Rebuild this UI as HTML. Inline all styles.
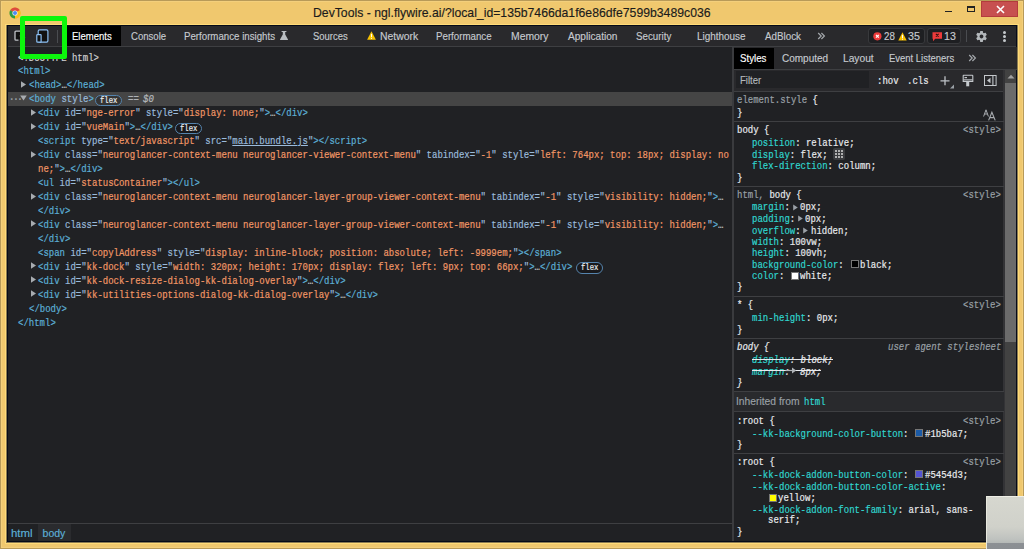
<!DOCTYPE html>
<html><head><meta charset="utf-8"><style>
html,body{margin:0;padding:0;width:1024px;height:549px;overflow:hidden;position:relative;background:#f0c86e}
body>div,body>span,body>svg{position:absolute}
.t{white-space:pre}
</style></head><body>
<div style="left:0px;top:0px;width:1024px;height:549px;background:#f0c86e"></div>
<div style="left:0px;top:0px;width:1024px;height:1px;background:#b89a58"></div>
<div style="left:0px;top:0px;width:1px;height:549px;background:#b89a58"></div>
<div style="left:1023px;top:0px;width:1px;height:549px;background:#b89a58"></div>
<div style="left:0px;top:548px;width:1024px;height:1px;background:#b89a58"></div>
<div style="left:1px;top:1px;width:1022px;height:547px;box-sizing:border-box;border:1px solid #f3cf7c"></div>
<div style="left:5px;top:24px;width:1014px;height:520px;background:#ffdb78"></div>
<svg style="position:absolute;left:8.5px;top:6.5px" width="12" height="12" viewBox="0 0 12 12">
<circle cx="6" cy="6" r="5.5" fill="#f0b030"/>
<path d="M6 6 L1.24 3.25 A5.5 5.5 0 0 1 10.76 3.25 Z" fill="#dd4b3e"/>
<path d="M6 6 L10.76 3.25 A5.5 5.5 0 0 1 6 11.5 Z" fill="#f6c21c"/>
<path d="M6 6 L6 11.5 A5.5 5.5 0 0 1 1.24 3.25 Z" fill="#2a9d4a"/>
<circle cx="6" cy="6" r="2.6" fill="#f4f4f4"/>
<circle cx="6" cy="6" r="2.0" fill="#4a8af4"/>
</svg>
<span class="t" style="left:312.80px;top:2.57px;font-family:'Liberation Sans', sans-serif;font-size:12.2px;font-weight:400;font-style:normal;line-height:20px;color:#1b1b1b;-webkit-text-stroke:0.15px;transform:scaleX(1.0038);transform-origin:0 0;">DevTools - ngl.flywire.ai/?local_id=135b7466da1f6e86dfe7599b3489c036</span>
<div style="left:945px;top:10.5px;width:7px;height:1.6px;background:#222"></div>
<div style="left:967px;top:6px;width:8px;height:6px;box-sizing:border-box;border:1px solid #222;border-top-width:2px"></div>
<div style="left:981px;top:1px;width:37px;height:16px;background:#c75050;box-sizing:border-box;border:1px solid #b33c3c"></div>
<svg style="position:absolute;left:996px;top:5px" width="9" height="9" viewBox="0 0 9 9"><path d="M1 1L8 8M8 1L1 8" stroke="#fff" stroke-width="1.6"/></svg>
<div style="left:6px;top:25px;width:1012px;height:518px;background:#8a7a52"></div>
<div style="left:7px;top:25px;width:1010px;height:517px;background:#050a18"></div>
<div style="left:8px;top:26px;width:1008px;height:515px;background:#202124"></div>
<div style="left:8px;top:26px;width:1008px;height:20px;background:#29292c"></div>
<div style="left:8px;top:46px;width:1008px;height:1px;background:#3e3f42"></div>
<svg style="position:absolute;left:14px;top:30px" width="13" height="12" viewBox="0 0 13 12"><path d="M4.5 10.2H1.9Q1 10.2 1 9.3V2Q1 1.2 1.9 1.2H9.5Q10.3 1.2 10.3 2V4.5" fill="#111" stroke="#c0c4c8" stroke-width="1.3"/><path d="M5.5 5.5L11.5 7.8L9 8.8L7.8 11.3Z" fill="#c0c4c8"/></svg>
<svg style="position:absolute;left:35px;top:28px" width="15" height="16" viewBox="0 0 15 16"><rect x="3.2" y="1.9" width="9.7" height="12.2" rx="1.3" fill="#111" stroke="#8cc0f4" stroke-width="1.2"/><rect x="1.8" y="6.6" width="4.3" height="7.5" rx="0.6" fill="#111" stroke="#8cc0f4" stroke-width="1.2"/></svg>
<div style="left:57px;top:30px;width:1px;height:13px;background:#4a4c50"></div>
<div style="left:67px;top:26px;width:54px;height:20px;background:#000"></div>
<span class="t" style="left:71.79px;top:26.36px;font-family:'Liberation Sans', sans-serif;font-size:10.5px;font-weight:400;font-style:normal;line-height:20px;color:#ffffff;-webkit-text-stroke:0.15px;transform:scaleX(0.9070);transform-origin:0 0;">Elements</span>
<span class="t" style="left:130.70px;top:26.36px;font-family:'Liberation Sans', sans-serif;font-size:10.5px;font-weight:400;font-style:normal;line-height:20px;color:#c6cacf;-webkit-text-stroke:0.15px;transform:scaleX(0.9105);transform-origin:0 0;">Console</span>
<span class="t" style="left:183.88px;top:26.36px;font-family:'Liberation Sans', sans-serif;font-size:10.5px;font-weight:400;font-style:normal;line-height:20px;color:#c6cacf;-webkit-text-stroke:0.15px;transform:scaleX(0.9224);transform-origin:0 0;">Performance insights</span>
<span class="t" style="left:313.20px;top:26.36px;font-family:'Liberation Sans', sans-serif;font-size:10.5px;font-weight:400;font-style:normal;line-height:20px;color:#c6cacf;-webkit-text-stroke:0.15px;transform:scaleX(0.9000);transform-origin:0 0;">Sources</span>
<span class="t" style="left:379.81px;top:26.36px;font-family:'Liberation Sans', sans-serif;font-size:10.5px;font-weight:400;font-style:normal;line-height:20px;color:#c6cacf;-webkit-text-stroke:0.15px;transform:scaleX(0.9919);transform-origin:0 0;">Network</span>
<span class="t" style="left:436.17px;top:26.36px;font-family:'Liberation Sans', sans-serif;font-size:10.5px;font-weight:400;font-style:normal;line-height:20px;color:#c6cacf;-webkit-text-stroke:0.15px;transform:scaleX(0.9254);transform-origin:0 0;">Performance</span>
<span class="t" style="left:510.71px;top:26.36px;font-family:'Liberation Sans', sans-serif;font-size:10.5px;font-weight:400;font-style:normal;line-height:20px;color:#c6cacf;-webkit-text-stroke:0.15px;transform:scaleX(0.9892);transform-origin:0 0;">Memory</span>
<span class="t" style="left:568.00px;top:26.36px;font-family:'Liberation Sans', sans-serif;font-size:10.5px;font-weight:400;font-style:normal;line-height:20px;color:#c6cacf;-webkit-text-stroke:0.15px;transform:scaleX(0.9627);transform-origin:0 0;">Application</span>
<span class="t" style="left:635.57px;top:26.36px;font-family:'Liberation Sans', sans-serif;font-size:10.5px;font-weight:400;font-style:normal;line-height:20px;color:#c6cacf;-webkit-text-stroke:0.15px;transform:scaleX(0.9297);transform-origin:0 0;">Security</span>
<span class="t" style="left:697.45px;top:26.36px;font-family:'Liberation Sans', sans-serif;font-size:10.5px;font-weight:400;font-style:normal;line-height:20px;color:#c6cacf;-webkit-text-stroke:0.15px;transform:scaleX(0.9460);transform-origin:0 0;">Lighthouse</span>
<span class="t" style="left:765.00px;top:26.36px;font-family:'Liberation Sans', sans-serif;font-size:10.5px;font-weight:400;font-style:normal;line-height:20px;color:#c6cacf;-webkit-text-stroke:0.15px;transform:scaleX(0.9342);transform-origin:0 0;">AdBlock</span>
<svg style="position:absolute;left:280px;top:31px" width="8" height="9" viewBox="0 0 8 9"><path d="M1.6 0H6.4V1.1H5.2V3.5L8 8.5Q8 9 7.5 9H0.5Q0 9 0 8.5L2.8 3.5V1.1H1.6Z" fill="#b8bcc0"/></svg>
<svg style="position:absolute;left:367px;top:31.3px" width="9" height="9" viewBox="0 0 9 9"><path d="M4.5 0.2L8.9 8.7H0.1Z" fill="#f6c000"/><rect x="4" y="2.8" width="1" height="3.2" fill="#fff"/><rect x="4" y="6.8" width="1" height="1" fill="#fff"/></svg>
<svg style="position:absolute;left:817px;top:32px" width="9" height="8" viewBox="0 0 9 8"><path d="M1.2 1L4.2 4L1.2 7M4.4 1L7.4 4L4.4 7" fill="none" stroke="#a4a8ac" stroke-width="1.2"/></svg>
<div style="left:867.5px;top:28px;width:57.5px;height:16px;box-sizing:border-box;border:1.6px solid #38393c;border-radius:3px;background:#1e1f22"></div>
<svg style="position:absolute;left:872.5px;top:32.2px" width="9" height="9" viewBox="0 0 9 9"><circle cx="4.4" cy="4.3" r="4.1" fill="#ee3b3b"/><path d="M3 2.9L5.8 5.7M5.8 2.9L3 5.7" stroke="#fff" stroke-width="1.2"/></svg>
<span class="t" style="left:883.80px;top:26.36px;font-family:'Liberation Sans', sans-serif;font-size:10.5px;font-weight:400;font-style:normal;line-height:20px;color:#c6cacf;-webkit-text-stroke:0.15px;transform:scaleX(0.9273);transform-origin:0 0;">28</span>
<svg style="position:absolute;left:898px;top:32px" width="9" height="9" viewBox="0 0 9 9"><path d="M4.5 0.2L8.7 8.6H0.3Z" fill="#f6c000"/><rect x="4" y="2.8" width="1" height="3.2" fill="#fff"/><rect x="4" y="6.7" width="1" height="1" fill="#fff"/></svg>
<span class="t" style="left:907.78px;top:26.36px;font-family:'Liberation Sans', sans-serif;font-size:10.5px;font-weight:400;font-style:normal;line-height:20px;color:#c6cacf;-webkit-text-stroke:0.15px;transform:scaleX(1.0200);transform-origin:0 0;">35</span>
<div style="left:926.5px;top:28px;width:34.5px;height:16px;box-sizing:border-box;border:1.6px solid #38393c;border-radius:3px;background:#1e1f22"></div>
<svg style="position:absolute;left:932px;top:32px" width="11" height="10" viewBox="0 0 11 10"><path d="M0.5 0.3H10V6.8H3.2L1 9.3V6.8H0.5Z" fill="#ee3b3b"/><path d="M3.9 1.9L6.6 4.6M6.6 1.9L3.9 4.6" stroke="#2a1010" stroke-width="1.1"/></svg>
<span class="t" style="left:944.19px;top:26.36px;font-family:'Liberation Sans', sans-serif;font-size:10.5px;font-weight:400;font-style:normal;line-height:20px;color:#c6cacf;-webkit-text-stroke:0.15px;transform:scaleX(1.0100);transform-origin:0 0;">13</span>
<div style="left:966px;top:30px;width:1px;height:12px;background:#4a4c50"></div>
<svg style="position:absolute;left:975px;top:30px" width="13" height="13" viewBox="0 0 24 24"><path fill="#b4b8bc" d="M19.4 13c.04-.32.1-.66.1-1s-.03-.68-.07-1l2.1-1.65c.2-.15.25-.42.13-.64l-2-3.46c-.12-.22-.39-.3-.61-.22l-2.49 1c-.52-.4-1.08-.73-1.69-.98l-.38-2.65C14.46 2.18 14.25 2 14 2h-4c-.25 0-.46.18-.49.42l-.38 2.65c-.61.25-1.17.59-1.69.98l-2.49-1c-.23-.09-.49 0-.61.22l-2 3.46c-.13.22-.07.49.12.64L4.57 11c-.04.32-.07.65-.07 1s.03.68.07 1l-2.11 1.65c-.19.15-.24.42-.12.64l2 3.46c.12.22.39.3.61.22l2.49-1c.52.4 1.08.73 1.69.98l.38 2.65c.03.24.24.42.49.42h4c.25 0 .46-.18.49-.42l.38-2.65c.61-.25 1.17-.59 1.69-.98l2.49 1c.23.09.49 0 .61-.22l2-3.46c.12-.22.07-.49-.12-.64L19.4 13zM12 15.5c-1.93 0-3.5-1.57-3.5-3.5s1.57-3.5 3.5-3.5 3.5 1.57 3.5 3.5-1.57 3.5-3.5 3.5z"/></svg>
<div style="left:1002.8px;top:30.8px;width:3.2px;height:3.2px;background:#c4c8cc;border-radius:50%"></div>
<div style="left:1002.8px;top:34.8px;width:3.2px;height:3.2px;background:#c4c8cc;border-radius:50%"></div>
<div style="left:1002.8px;top:38.8px;width:3.2px;height:3.2px;background:#c4c8cc;border-radius:50%"></div>
<div style="left:8px;top:92px;width:724px;height:13.6px;background:#454545"></div>
<span class="t" style="left:18.4px;top:47.53px;font-family:'Liberation Mono', monospace;font-size:10.6px;line-height:20px;letter-spacing:0.000px;-webkit-text-stroke:0.2px;transform:scaleX(0.8489);transform-origin:0 0;"><span style="color:#cfd0d0">&lt;!DOCTYPE html&gt;</span></span>
<span class="t" style="left:18.4px;top:61.48px;font-family:'Liberation Mono', monospace;font-size:10.6px;line-height:20px;letter-spacing:0.000px;-webkit-text-stroke:0.2px;transform:scaleX(0.8489);transform-origin:0 0;"><span style="color:#5db0d7">&lt;html&gt;</span></span>
<svg style="position:absolute;left:21px;top:80.86px" width="6" height="7" viewBox="0 0 6 7"><path d="M0 0.2L5 3.5L0 6.8Z" fill="#a8acb0"/></svg>
<span class="t" style="left:28.6px;top:75.44px;font-family:'Liberation Mono', monospace;font-size:10.6px;line-height:20px;letter-spacing:0.000px;-webkit-text-stroke:0.2px;transform:scaleX(0.8489);transform-origin:0 0;"><span style="color:#5db0d7">&lt;head&gt;</span><span style="color:#cfd0d0">…</span><span style="color:#5db0d7">&lt;/head&gt;</span></span>
<span class="t" style="left:8.5px;top:89.39px;font-family:'Liberation Mono', monospace;font-size:10.6px;line-height:20px;letter-spacing:-2.200px;-webkit-text-stroke:0.2px;"><span style="color:#9aa0a6">···</span></span>
<svg style="position:absolute;left:20px;top:95.22px" width="7" height="6" viewBox="0 0 7 6"><path d="M0.2 0.5L6.8 0.5L3.5 5.5Z" fill="#a8acb0"/></svg>
<span class="t" style="left:28.6px;top:89.39px;font-family:'Liberation Mono', monospace;font-size:10.6px;line-height:20px;letter-spacing:0.000px;-webkit-text-stroke:0.2px;transform:scaleX(0.8489);transform-origin:0 0;"><span style="color:#5db0d7">&lt;body</span><span style="color:#9bbbdc"> style</span><span style="color:#5db0d7">&gt;</span></span>
<div style="left:95px;top:94.82px;width:27px;height:11.6px;box-sizing:border-box;border:1.3px solid #5584ad;border-radius:6px;background:rgba(0,0,0,0.22)"></div>
<span class="t" style="left:100.20px;top:90.92px;font-family:'Liberation Mono', monospace;font-size:9px;font-weight:400;font-style:normal;line-height:20px;color:#eef0f2;-webkit-text-stroke:0.15px;transform:scaleX(0.8000);transform-origin:0 0;-webkit-text-stroke:0.2px #eef0f2">flex</span>
<span class="t" style="left:127.5px;top:89.39px;font-family:'Liberation Mono', monospace;font-size:10.6px;line-height:20px;letter-spacing:0.000px;-webkit-text-stroke:0.2px;transform:scaleX(0.8489);transform-origin:0 0;"><span style="color:#aeb2b6">==</span></span>
<span class="t" style="left:143px;top:89.39px;font-family:'Liberation Mono', monospace;font-size:10.6px;line-height:20px;letter-spacing:0.000px;-webkit-text-stroke:0.2px;transform:scaleX(0.8489);transform-origin:0 0;font-style:italic"><span style="color:#b4b8bc">$0</span></span>
<svg style="position:absolute;left:31px;top:108.77px" width="6" height="7" viewBox="0 0 6 7"><path d="M0 0.2L5 3.5L0 6.8Z" fill="#a8acb0"/></svg>
<span class="t" style="left:38.4px;top:103.35px;font-family:'Liberation Mono', monospace;font-size:10.6px;line-height:20px;letter-spacing:0.000px;-webkit-text-stroke:0.2px;transform:scaleX(0.8489);transform-origin:0 0;"><span style="color:#5db0d7">&lt;div</span><span style="color:#9bbbdc"> id</span><span style="color:#9bbbdc">=&quot;</span><span style="color:#f29766">nge-error</span><span style="color:#9bbbdc">&quot;</span><span style="color:#9bbbdc"> style</span><span style="color:#9bbbdc">=&quot;</span><span style="color:#f29766">display: none;</span><span style="color:#9bbbdc">&quot;</span><span style="color:#5db0d7">&gt;</span><span style="color:#cfd0d0">…</span><span style="color:#5db0d7">&lt;/div&gt;</span></span>
<svg style="position:absolute;left:31px;top:122.73px" width="6" height="7" viewBox="0 0 6 7"><path d="M0 0.2L5 3.5L0 6.8Z" fill="#a8acb0"/></svg>
<span class="t" style="left:38.4px;top:117.31px;font-family:'Liberation Mono', monospace;font-size:10.6px;line-height:20px;letter-spacing:0.000px;-webkit-text-stroke:0.2px;transform:scaleX(0.8489);transform-origin:0 0;"><span style="color:#5db0d7">&lt;div</span><span style="color:#9bbbdc"> id</span><span style="color:#9bbbdc">=&quot;</span><span style="color:#f29766">vueMain</span><span style="color:#9bbbdc">&quot;</span><span style="color:#5db0d7">&gt;</span><span style="color:#cfd0d0">…</span><span style="color:#5db0d7">&lt;/div&gt;</span></span>
<div style="left:175px;top:122.73px;width:27px;height:11.6px;box-sizing:border-box;border:1.3px solid #5584ad;border-radius:6px;background:rgba(0,0,0,0.22)"></div>
<span class="t" style="left:180.20px;top:118.83px;font-family:'Liberation Mono', monospace;font-size:9px;font-weight:400;font-style:normal;line-height:20px;color:#eef0f2;-webkit-text-stroke:0.15px;transform:scaleX(0.8000);transform-origin:0 0;-webkit-text-stroke:0.2px #eef0f2">flex</span>
<span class="t" style="left:38.4px;top:131.26px;font-family:'Liberation Mono', monospace;font-size:10.6px;line-height:20px;letter-spacing:0.000px;-webkit-text-stroke:0.2px;transform:scaleX(0.8489);transform-origin:0 0;"><span style="color:#5db0d7">&lt;script</span><span style="color:#9bbbdc"> type</span><span style="color:#9bbbdc">=&quot;</span><span style="color:#f29766">text/javascript</span><span style="color:#9bbbdc">&quot;</span><span style="color:#9bbbdc"> src</span><span style="color:#9bbbdc">=&quot;</span><span style="color:#9bbbdc;text-decoration:underline">main.bundle.js</span><span style="color:#9bbbdc">&quot;</span><span style="color:#5db0d7">&gt;&lt;/script&gt;</span></span>
<svg style="position:absolute;left:31px;top:150.64px" width="6" height="7" viewBox="0 0 6 7"><path d="M0 0.2L5 3.5L0 6.8Z" fill="#a8acb0"/></svg>
<span class="t" style="left:38.4px;top:145.22px;font-family:'Liberation Mono', monospace;font-size:10.6px;line-height:20px;letter-spacing:0.000px;-webkit-text-stroke:0.2px;transform:scaleX(0.8489);transform-origin:0 0;"><span style="color:#5db0d7">&lt;div</span><span style="color:#9bbbdc"> class</span><span style="color:#9bbbdc">=&quot;</span><span style="color:#f29766">neuroglancer-context-menu neuroglancer-viewer-context-menu</span><span style="color:#9bbbdc">&quot;</span><span style="color:#9bbbdc"> tabindex</span><span style="color:#9bbbdc">=&quot;</span><span style="color:#f29766">-1</span><span style="color:#9bbbdc">&quot;</span><span style="color:#9bbbdc"> style</span><span style="color:#9bbbdc">=&quot;</span><span style="color:#f29766">left: 764px; top: 18px; display: no</span></span>
<span class="t" style="left:38.4px;top:159.17px;font-family:'Liberation Mono', monospace;font-size:10.6px;line-height:20px;letter-spacing:0.000px;-webkit-text-stroke:0.2px;transform:scaleX(0.8489);transform-origin:0 0;"><span style="color:#f29766">ne;</span><span style="color:#9bbbdc">&quot;</span><span style="color:#5db0d7">&gt;</span><span style="color:#cfd0d0">…</span><span style="color:#5db0d7">&lt;/div&gt;</span></span>
<span class="t" style="left:38.4px;top:173.13px;font-family:'Liberation Mono', monospace;font-size:10.6px;line-height:20px;letter-spacing:0.000px;-webkit-text-stroke:0.2px;transform:scaleX(0.8489);transform-origin:0 0;"><span style="color:#5db0d7">&lt;ul</span><span style="color:#9bbbdc"> id</span><span style="color:#9bbbdc">=&quot;</span><span style="color:#f29766">statusContainer</span><span style="color:#9bbbdc">&quot;</span><span style="color:#5db0d7">&gt;&lt;/ul&gt;</span></span>
<svg style="position:absolute;left:31px;top:192.51px" width="6" height="7" viewBox="0 0 6 7"><path d="M0 0.2L5 3.5L0 6.8Z" fill="#a8acb0"/></svg>
<span class="t" style="left:38.4px;top:187.09px;font-family:'Liberation Mono', monospace;font-size:10.6px;line-height:20px;letter-spacing:0.000px;-webkit-text-stroke:0.2px;transform:scaleX(0.8489);transform-origin:0 0;"><span style="color:#5db0d7">&lt;div</span><span style="color:#9bbbdc"> class</span><span style="color:#9bbbdc">=&quot;</span><span style="color:#f29766">neuroglancer-context-menu neuroglancer-layer-group-viewer-context-menu</span><span style="color:#9bbbdc">&quot;</span><span style="color:#9bbbdc"> tabindex</span><span style="color:#9bbbdc">=&quot;</span><span style="color:#f29766">-1</span><span style="color:#9bbbdc">&quot;</span><span style="color:#9bbbdc"> style</span><span style="color:#9bbbdc">=&quot;</span><span style="color:#f29766">visibility: hidden;</span><span style="color:#9bbbdc">&quot;</span><span style="color:#5db0d7">&gt;</span><span style="color:#cfd0d0">…</span></span>
<span class="t" style="left:38.4px;top:201.04px;font-family:'Liberation Mono', monospace;font-size:10.6px;line-height:20px;letter-spacing:0.000px;-webkit-text-stroke:0.2px;transform:scaleX(0.8489);transform-origin:0 0;"><span style="color:#5db0d7">&lt;/div&gt;</span></span>
<svg style="position:absolute;left:31px;top:220.42px" width="6" height="7" viewBox="0 0 6 7"><path d="M0 0.2L5 3.5L0 6.8Z" fill="#a8acb0"/></svg>
<span class="t" style="left:38.4px;top:215.00px;font-family:'Liberation Mono', monospace;font-size:10.6px;line-height:20px;letter-spacing:0.000px;-webkit-text-stroke:0.2px;transform:scaleX(0.8489);transform-origin:0 0;"><span style="color:#5db0d7">&lt;div</span><span style="color:#9bbbdc"> class</span><span style="color:#9bbbdc">=&quot;</span><span style="color:#f29766">neuroglancer-context-menu neuroglancer-layer-group-viewer-context-menu</span><span style="color:#9bbbdc">&quot;</span><span style="color:#9bbbdc"> tabindex</span><span style="color:#9bbbdc">=&quot;</span><span style="color:#f29766">-1</span><span style="color:#9bbbdc">&quot;</span><span style="color:#9bbbdc"> style</span><span style="color:#9bbbdc">=&quot;</span><span style="color:#f29766">visibility: hidden;</span><span style="color:#9bbbdc">&quot;</span><span style="color:#5db0d7">&gt;</span><span style="color:#cfd0d0">…</span></span>
<span class="t" style="left:38.4px;top:228.95px;font-family:'Liberation Mono', monospace;font-size:10.6px;line-height:20px;letter-spacing:0.000px;-webkit-text-stroke:0.2px;transform:scaleX(0.8489);transform-origin:0 0;"><span style="color:#5db0d7">&lt;/div&gt;</span></span>
<span class="t" style="left:38.4px;top:242.91px;font-family:'Liberation Mono', monospace;font-size:10.6px;line-height:20px;letter-spacing:0.000px;-webkit-text-stroke:0.2px;transform:scaleX(0.8489);transform-origin:0 0;"><span style="color:#5db0d7">&lt;span</span><span style="color:#9bbbdc"> id</span><span style="color:#9bbbdc">=&quot;</span><span style="color:#f29766">copylAddress</span><span style="color:#9bbbdc">&quot;</span><span style="color:#9bbbdc"> style</span><span style="color:#9bbbdc">=&quot;</span><span style="color:#f29766">display: inline-block; position: absolute; left: -9999em;</span><span style="color:#9bbbdc">&quot;</span><span style="color:#5db0d7">&gt;&lt;/span&gt;</span></span>
<svg style="position:absolute;left:31px;top:262.29px" width="6" height="7" viewBox="0 0 6 7"><path d="M0 0.2L5 3.5L0 6.8Z" fill="#a8acb0"/></svg>
<span class="t" style="left:38.4px;top:256.87px;font-family:'Liberation Mono', monospace;font-size:10.6px;line-height:20px;letter-spacing:0.000px;-webkit-text-stroke:0.2px;transform:scaleX(0.8489);transform-origin:0 0;"><span style="color:#5db0d7">&lt;div</span><span style="color:#9bbbdc"> id</span><span style="color:#9bbbdc">=&quot;</span><span style="color:#f29766">kk-dock</span><span style="color:#9bbbdc">&quot;</span><span style="color:#9bbbdc"> style</span><span style="color:#9bbbdc">=&quot;</span><span style="color:#f29766">width: 320px; height: 170px; display: flex; left: 9px; top: 66px;</span><span style="color:#9bbbdc">&quot;</span><span style="color:#5db0d7">&gt;</span><span style="color:#cfd0d0">…</span><span style="color:#5db0d7">&lt;/div&gt;</span></span>
<div style="left:575.5px;top:262.29px;width:27px;height:11.6px;box-sizing:border-box;border:1.3px solid #5584ad;border-radius:6px;background:rgba(0,0,0,0.22)"></div>
<span class="t" style="left:580.70px;top:258.39px;font-family:'Liberation Mono', monospace;font-size:9px;font-weight:400;font-style:normal;line-height:20px;color:#eef0f2;-webkit-text-stroke:0.15px;transform:scaleX(0.8000);transform-origin:0 0;-webkit-text-stroke:0.2px #eef0f2">flex</span>
<svg style="position:absolute;left:31px;top:276.25px" width="6" height="7" viewBox="0 0 6 7"><path d="M0 0.2L5 3.5L0 6.8Z" fill="#a8acb0"/></svg>
<span class="t" style="left:38.4px;top:270.82px;font-family:'Liberation Mono', monospace;font-size:10.6px;line-height:20px;letter-spacing:0.000px;-webkit-text-stroke:0.2px;transform:scaleX(0.8489);transform-origin:0 0;"><span style="color:#5db0d7">&lt;div</span><span style="color:#9bbbdc"> id</span><span style="color:#9bbbdc">=&quot;</span><span style="color:#f29766">kk-dock-resize-dialog-kk-dialog-overlay</span><span style="color:#9bbbdc">&quot;</span><span style="color:#5db0d7">&gt;</span><span style="color:#cfd0d0">…</span><span style="color:#5db0d7">&lt;/div&gt;</span></span>
<svg style="position:absolute;left:31px;top:290.20px" width="6" height="7" viewBox="0 0 6 7"><path d="M0 0.2L5 3.5L0 6.8Z" fill="#a8acb0"/></svg>
<span class="t" style="left:38.4px;top:284.78px;font-family:'Liberation Mono', monospace;font-size:10.6px;line-height:20px;letter-spacing:0.000px;-webkit-text-stroke:0.2px;transform:scaleX(0.8489);transform-origin:0 0;"><span style="color:#5db0d7">&lt;div</span><span style="color:#9bbbdc"> id</span><span style="color:#9bbbdc">=&quot;</span><span style="color:#f29766">kk-utilities-options-dialog-kk-dialog-overlay</span><span style="color:#9bbbdc">&quot;</span><span style="color:#5db0d7">&gt;</span><span style="color:#cfd0d0">…</span><span style="color:#5db0d7">&lt;/div&gt;</span></span>
<span class="t" style="left:28.6px;top:298.73px;font-family:'Liberation Mono', monospace;font-size:10.6px;line-height:20px;letter-spacing:0.000px;-webkit-text-stroke:0.2px;transform:scaleX(0.8489);transform-origin:0 0;"><span style="color:#5db0d7">&lt;/body&gt;</span></span>
<span class="t" style="left:18.4px;top:312.69px;font-family:'Liberation Mono', monospace;font-size:10.6px;line-height:20px;letter-spacing:0.000px;-webkit-text-stroke:0.2px;transform:scaleX(0.8489);transform-origin:0 0;"><span style="color:#5db0d7">&lt;/html&gt;</span></span>
<div style="left:8px;top:523px;width:724px;height:1px;background:#3e3f42"></div>
<div style="left:38px;top:524px;width:33px;height:17px;background:#2a2b2e"></div>
<span class="t" style="left:11.21px;top:523.26px;font-family:'Liberation Sans', sans-serif;font-size:10.5px;font-weight:400;font-style:normal;line-height:20px;color:#5db0d7;-webkit-text-stroke:0.15px;transform:scaleX(1.0889);transform-origin:0 0;">html</span>
<span class="t" style="left:42.60px;top:523.26px;font-family:'Liberation Sans', sans-serif;font-size:10.5px;font-weight:400;font-style:normal;line-height:20px;color:#5db0d7;-webkit-text-stroke:0.15px;transform:scaleX(1.0000);transform-origin:0 0;">body</span>
<div style="left:732px;top:47px;width:2px;height:494px;background:#3a3b3e"></div>
<div style="left:734px;top:47px;width:283px;height:22px;background:#29292c"></div>
<div style="left:734px;top:69px;width:283px;height:1px;background:#3e3f42"></div>
<div style="left:734px;top:48px;width:40px;height:21px;background:#000"></div>
<span class="t" style="left:740.48px;top:48.36px;font-family:'Liberation Sans', sans-serif;font-size:10.5px;font-weight:400;font-style:normal;line-height:20px;color:#fff;-webkit-text-stroke:0.15px;transform:scaleX(0.9222);transform-origin:0 0;">Styles</span>
<span class="t" style="left:782.00px;top:48.36px;font-family:'Liberation Sans', sans-serif;font-size:10.5px;font-weight:400;font-style:normal;line-height:20px;color:#c6cacf;-webkit-text-stroke:0.15px;transform:scaleX(0.9521);transform-origin:0 0;">Computed</span>
<span class="t" style="left:843.23px;top:48.36px;font-family:'Liberation Sans', sans-serif;font-size:10.5px;font-weight:400;font-style:normal;line-height:20px;color:#c6cacf;-webkit-text-stroke:0.15px;transform:scaleX(0.9733);transform-origin:0 0;">Layout</span>
<span class="t" style="left:888.50px;top:48.36px;font-family:'Liberation Sans', sans-serif;font-size:10.5px;font-weight:400;font-style:normal;line-height:20px;color:#c6cacf;-webkit-text-stroke:0.15px;transform:scaleX(0.9014);transform-origin:0 0;">Event Listeners</span>
<svg style="position:absolute;left:968px;top:54px" width="9" height="8" viewBox="0 0 9 8"><path d="M1.2 1L4.2 4L1.2 7M4.4 1L7.4 4L4.4 7" fill="none" stroke="#a4a8ac" stroke-width="1.2"/></svg>
<div style="left:734px;top:70px;width:270px;height:21px;background:#29292c"></div>
<div style="left:734px;top:91px;width:270px;height:1px;background:#3e3f42"></div>
<div style="left:736px;top:71px;width:133px;height:17px;background:#202124"></div>
<span class="t" style="left:739.59px;top:70.36px;font-family:'Liberation Sans', sans-serif;font-size:10.5px;font-weight:400;font-style:normal;line-height:20px;color:#b4b8bc;-webkit-text-stroke:0.15px;transform:scaleX(0.9091);transform-origin:0 0;">Filter</span>
<span class="t" style="left:877.2px;top:71.18px;font-family:'Liberation Mono', monospace;font-size:10.6px;line-height:20px;letter-spacing:0.000px;-webkit-text-stroke:0.2px;transform:scaleX(0.8489);transform-origin:0 0;"><span style="color:#e8eaed">:hov</span></span>
<span class="t" style="left:906.8px;top:71.18px;font-family:'Liberation Mono', monospace;font-size:10.6px;line-height:20px;letter-spacing:0.000px;-webkit-text-stroke:0.2px;transform:scaleX(0.8489);transform-origin:0 0;"><span style="color:#e8eaed">.cls</span></span>
<svg style="position:absolute;left:939px;top:75px" width="16" height="14" viewBox="0 0 16 14"><path d="M1.5 5.8H10.5M6 1.3V10.3" stroke="#bdc1c6" stroke-width="1.3"/><path d="M15 9.5V13.5H11Z" fill="#9aa0a6"/></svg>
<svg style="position:absolute;left:962px;top:74px" width="12" height="13" viewBox="0 0 12 13"><path d="M1.5 1.2H10.2Q10.8 1.2 10.8 1.8V7.4H1.2V1.8Q1.2 1.2 1.5 1.2Z" fill="none" stroke="#c4c8cc" stroke-width="1.1"/><path d="M1.5 5.8H10.5" stroke="#c4c8cc" stroke-width="1"/><path d="M2.5 3H5V4.2H2.5Z" fill="#c4c8cc"/><path d="M4.2 7.8H7.2V12.3H4.2Z" fill="#c4c8cc"/></svg>
<svg style="position:absolute;left:984px;top:75px" width="13" height="11" viewBox="0 0 13 11"><rect x="0.5" y="0.5" width="11.6" height="10" fill="none" stroke="#c4c8cc" stroke-width="1"/><path d="M8.9 0.5V10.5" stroke="#c4c8cc" stroke-width="1.1"/><path d="M6.5 2.8V8.2L3 5.5Z" fill="#c4c8cc"/></svg>
<div style="left:1003px;top:70px;width:13px;height:471px;background:#333336"></div>
<div style="left:1005px;top:70px;width:11px;height:471px;background:#424242"></div>
<div style="left:1005px;top:83px;width:11px;height:259px;background:#6b6b6b"></div>
<svg style="position:absolute;left:1006.5px;top:74px" width="8" height="5" viewBox="0 0 8 5"><path d="M0.5 4.5L4 0.8L7.5 4.5Z" fill="#a0a0a0"/></svg>
<span class="t" style="left:736.9px;top:89.98px;font-family:'Liberation Mono', monospace;font-size:10.6px;line-height:20px;letter-spacing:0.000px;-webkit-text-stroke:0.2px;transform:scaleX(0.8489);transform-origin:0 0;"><span style="color:#9aa0a6">element.style</span><span style="color:#e8eaed"> {</span></span>
<span class="t" style="left:736.9px;top:102.78px;font-family:'Liberation Mono', monospace;font-size:10.6px;line-height:20px;letter-spacing:0.000px;-webkit-text-stroke:0.2px;transform:scaleX(0.8489);transform-origin:0 0;"><span style="color:#e8eaed">}</span></span>
<svg style="position:absolute;left:983px;top:109px" width="14" height="12" viewBox="0 0 14 12"><path d="M0.6 7.5L3 0.8L5.4 7.5M1.5 5H4.5" fill="none" stroke="#a8acb0" stroke-width="1"/><path d="M5.6 11.4L8.9 3.2L12.2 11.4M6.8 8.6H11" fill="none" stroke="#a8acb0" stroke-width="1.1"/></svg>
<div style="left:734px;top:121px;width:270px;height:1px;background:#3e3f42"></div>
<span class="t" style="left:736.9px;top:120.28px;font-family:'Liberation Mono', monospace;font-size:10.6px;line-height:20px;letter-spacing:0.000px;-webkit-text-stroke:0.2px;transform:scaleX(0.8489);transform-origin:0 0;"><span style="color:#e8eaed">body {</span></span>
<span class="t" style="left:963.2px;top:120.28px;font-family:'Liberation Mono', monospace;font-size:10.6px;line-height:20px;letter-spacing:0.000px;-webkit-text-stroke:0.2px;transform:scaleX(0.8489);transform-origin:0 0;"><span style="color:#9aa0a6">&lt;style&gt;</span></span>
<span class="t" style="left:751.5px;top:133.18px;font-family:'Liberation Mono', monospace;font-size:10.6px;line-height:20px;letter-spacing:0.000px;-webkit-text-stroke:0.2px;transform:scaleX(0.8489);transform-origin:0 0;"><span style="color:#30d6cf">position</span><span style="color:#e8eaed">: relative;</span></span>
<span class="t" style="left:751.5px;top:144.98px;font-family:'Liberation Mono', monospace;font-size:10.6px;line-height:20px;letter-spacing:0.000px;-webkit-text-stroke:0.2px;transform:scaleX(0.8489);transform-origin:0 0;"><span style="color:#30d6cf">display</span><span style="color:#e8eaed">: flex;</span></span>
<div style="left:833px;top:148px;width:12px;height:12px;background:#3a3b3e;border-radius:2px"></div>
<svg style="position:absolute;left:835px;top:150px" width="8" height="8" viewBox="0 0 8 8"><path d="M0 0H8V2H0ZM0 3H8V5H0ZM0 6H8V8H0Z" fill="#b0b0b0"/><path d="M2.5 0V8M5.5 0V8" stroke="#3a3b3e" stroke-width="1"/></svg>
<span class="t" style="left:751.5px;top:156.18px;font-family:'Liberation Mono', monospace;font-size:10.6px;line-height:20px;letter-spacing:0.000px;-webkit-text-stroke:0.2px;transform:scaleX(0.8489);transform-origin:0 0;"><span style="color:#30d6cf">flex-direction</span><span style="color:#e8eaed">: column;</span></span>
<span class="t" style="left:736.9px;top:167.98px;font-family:'Liberation Mono', monospace;font-size:10.6px;line-height:20px;letter-spacing:0.000px;-webkit-text-stroke:0.2px;transform:scaleX(0.8489);transform-origin:0 0;"><span style="color:#e8eaed">}</span></span>
<div style="left:734px;top:186px;width:270px;height:1px;background:#3e3f42"></div>
<span class="t" style="left:736.9px;top:184.88px;font-family:'Liberation Mono', monospace;font-size:10.6px;line-height:20px;letter-spacing:0.000px;-webkit-text-stroke:0.2px;transform:scaleX(0.8489);transform-origin:0 0;"><span style="color:#9aa0a6">html, </span><span style="color:#e8eaed">body {</span></span>
<span class="t" style="left:963.2px;top:184.88px;font-family:'Liberation Mono', monospace;font-size:10.6px;line-height:20px;letter-spacing:0.000px;-webkit-text-stroke:0.2px;transform:scaleX(0.8489);transform-origin:0 0;"><span style="color:#9aa0a6">&lt;style&gt;</span></span>
<span class="t" style="left:751.5px;top:197.48px;font-family:'Liberation Mono', monospace;font-size:10.6px;line-height:20px;letter-spacing:0.000px;-webkit-text-stroke:0.2px;transform:scaleX(0.8489);transform-origin:0 0;"><span style="color:#30d6cf">margin</span><span style="color:#e8eaed">:</span></span>
<span class="t" style="left:800.0px;top:197.48px;font-family:'Liberation Mono', monospace;font-size:10.6px;line-height:20px;letter-spacing:0.000px;-webkit-text-stroke:0.2px;transform:scaleX(0.8489);transform-origin:0 0;"><span style="color:#e8eaed">0px;</span></span>
<svg style="position:absolute;left:792.5px;top:203.5px" width="5" height="7" viewBox="0 0 5 7"><path d="M0.2 0.5L4.8 3.5L0.2 6.5Z" fill="#9aa0a6"/></svg>
<span class="t" style="left:751.5px;top:209.18px;font-family:'Liberation Mono', monospace;font-size:10.6px;line-height:20px;letter-spacing:0.000px;-webkit-text-stroke:0.2px;transform:scaleX(0.8489);transform-origin:0 0;"><span style="color:#30d6cf">padding</span><span style="color:#e8eaed">:</span></span>
<span class="t" style="left:805.4000000000001px;top:209.18px;font-family:'Liberation Mono', monospace;font-size:10.6px;line-height:20px;letter-spacing:0.000px;-webkit-text-stroke:0.2px;transform:scaleX(0.8489);transform-origin:0 0;"><span style="color:#e8eaed">0px;</span></span>
<svg style="position:absolute;left:797.9px;top:215.2px" width="5" height="7" viewBox="0 0 5 7"><path d="M0.2 0.5L4.8 3.5L0.2 6.5Z" fill="#9aa0a6"/></svg>
<span class="t" style="left:751.5px;top:220.58px;font-family:'Liberation Mono', monospace;font-size:10.6px;line-height:20px;letter-spacing:0.000px;-webkit-text-stroke:0.2px;transform:scaleX(0.8489);transform-origin:0 0;"><span style="color:#30d6cf">overflow</span><span style="color:#e8eaed">:</span></span>
<span class="t" style="left:810.8000000000001px;top:220.58px;font-family:'Liberation Mono', monospace;font-size:10.6px;line-height:20px;letter-spacing:0.000px;-webkit-text-stroke:0.2px;transform:scaleX(0.8489);transform-origin:0 0;"><span style="color:#e8eaed">hidden;</span></span>
<svg style="position:absolute;left:803.3px;top:226.6px" width="5" height="7" viewBox="0 0 5 7"><path d="M0.2 0.5L4.8 3.5L0.2 6.5Z" fill="#9aa0a6"/></svg>
<span class="t" style="left:751.5px;top:231.58px;font-family:'Liberation Mono', monospace;font-size:10.6px;line-height:20px;letter-spacing:0.000px;-webkit-text-stroke:0.2px;transform:scaleX(0.8489);transform-origin:0 0;"><span style="color:#30d6cf">width</span><span style="color:#e8eaed">: 100vw;</span></span>
<span class="t" style="left:751.5px;top:242.98px;font-family:'Liberation Mono', monospace;font-size:10.6px;line-height:20px;letter-spacing:0.000px;-webkit-text-stroke:0.2px;transform:scaleX(0.8489);transform-origin:0 0;"><span style="color:#30d6cf">height</span><span style="color:#e8eaed">: 100vh;</span></span>
<span class="t" style="left:751.5px;top:254.68px;font-family:'Liberation Mono', monospace;font-size:10.6px;line-height:20px;letter-spacing:0.000px;-webkit-text-stroke:0.2px;transform:scaleX(0.8489);transform-origin:0 0;"><span style="color:#30d6cf">background-color</span><span style="color:#e8eaed">: </span></span>
<span class="t" style="left:859.7px;top:254.68px;font-family:'Liberation Mono', monospace;font-size:10.6px;line-height:20px;letter-spacing:0.000px;-webkit-text-stroke:0.2px;transform:scaleX(0.8489);transform-origin:0 0;"><span style="color:#e8eaed">black;</span></span>
<div style="left:850.5px;top:260.2px;width:8px;height:8px;background:#000;box-sizing:border-box;border:1px solid #777"></div>
<span class="t" style="left:751.5px;top:266.28px;font-family:'Liberation Mono', monospace;font-size:10.6px;line-height:20px;letter-spacing:0.000px;-webkit-text-stroke:0.2px;transform:scaleX(0.8489);transform-origin:0 0;"><span style="color:#30d6cf">color</span><span style="color:#e8eaed">: </span></span>
<span class="t" style="left:800.3px;top:266.28px;font-family:'Liberation Mono', monospace;font-size:10.6px;line-height:20px;letter-spacing:0.000px;-webkit-text-stroke:0.2px;transform:scaleX(0.8489);transform-origin:0 0;"><span style="color:#e8eaed">white;</span></span>
<div style="left:791.1px;top:271.8px;width:8px;height:8px;background:#fff;box-sizing:border-box;border:1px solid #777"></div>
<span class="t" style="left:736.9px;top:276.68px;font-family:'Liberation Mono', monospace;font-size:10.6px;line-height:20px;letter-spacing:0.000px;-webkit-text-stroke:0.2px;transform:scaleX(0.8489);transform-origin:0 0;"><span style="color:#e8eaed">}</span></span>
<div style="left:734px;top:296px;width:270px;height:1px;background:#3e3f42"></div>
<span class="t" style="left:736.9px;top:295.08px;font-family:'Liberation Mono', monospace;font-size:10.6px;line-height:20px;letter-spacing:0.000px;-webkit-text-stroke:0.2px;transform:scaleX(0.8489);transform-origin:0 0;"><span style="color:#e8eaed">* {</span></span>
<span class="t" style="left:963.2px;top:295.08px;font-family:'Liberation Mono', monospace;font-size:10.6px;line-height:20px;letter-spacing:0.000px;-webkit-text-stroke:0.2px;transform:scaleX(0.8489);transform-origin:0 0;"><span style="color:#9aa0a6">&lt;style&gt;</span></span>
<span class="t" style="left:751.5px;top:307.98px;font-family:'Liberation Mono', monospace;font-size:10.6px;line-height:20px;letter-spacing:0.000px;-webkit-text-stroke:0.2px;transform:scaleX(0.8489);transform-origin:0 0;"><span style="color:#30d6cf">min-height</span><span style="color:#e8eaed">: 0px;</span></span>
<span class="t" style="left:736.9px;top:319.98px;font-family:'Liberation Mono', monospace;font-size:10.6px;line-height:20px;letter-spacing:0.000px;-webkit-text-stroke:0.2px;transform:scaleX(0.8489);transform-origin:0 0;"><span style="color:#e8eaed">}</span></span>
<div style="left:734px;top:338px;width:270px;height:1px;background:#3e3f42"></div>
<span class="t" style="left:736.9px;top:336.58px;font-family:'Liberation Mono', monospace;font-size:10.6px;line-height:20px;letter-spacing:0.000px;-webkit-text-stroke:0.2px;transform:scaleX(0.8489);transform-origin:0 0;font-style:italic"><span style="color:#e8eaed">body {</span></span>
<span class="t" style="left:887.6px;top:336.58px;font-family:'Liberation Mono', monospace;font-size:10.6px;line-height:20px;letter-spacing:0.000px;-webkit-text-stroke:0.2px;transform:scaleX(0.8489);transform-origin:0 0;font-style:italic"><span style="color:#9aa0a6">user agent stylesheet</span></span>
<span class="t" style="left:751.5px;top:349.98px;font-family:'Liberation Mono', monospace;font-size:10.6px;line-height:20px;letter-spacing:0.000px;-webkit-text-stroke:0.2px;transform:scaleX(0.8489);transform-origin:0 0;font-style:italic"><span style="color:#30d6cf">display</span><span style="color:#e8eaed">: block;</span></span>
<div style="left:751.5px;top:359px;width:81.0px;height:1px;background:#e8eaed"></div>
<span class="t" style="left:751.5px;top:361.68px;font-family:'Liberation Mono', monospace;font-size:10.6px;line-height:20px;letter-spacing:0.000px;-webkit-text-stroke:0.2px;transform:scaleX(0.8489);transform-origin:0 0;font-style:italic"><span style="color:#30d6cf">margin</span><span style="color:#e8eaed">:</span></span>
<span class="t" style="left:800px;top:361.68px;font-family:'Liberation Mono', monospace;font-size:10.6px;line-height:20px;letter-spacing:0.000px;-webkit-text-stroke:0.2px;transform:scaleX(0.8489);transform-origin:0 0;font-style:italic"><span style="color:#e8eaed">8px;</span></span>
<div style="left:751.5px;top:370px;width:69.5px;height:1px;background:#e8eaed"></div>
<svg style="position:absolute;left:785px;top:367px" width="12" height="7" viewBox="0 0 12 7"><path d="M0.5 3.5H8" stroke="#b0b4b8" stroke-width="1.2"/><path d="M7 0.6L11.2 3.5L7 6.4Z" fill="#b0b4b8"/></svg>
<span class="t" style="left:736.9px;top:372.68px;font-family:'Liberation Mono', monospace;font-size:10.6px;line-height:20px;letter-spacing:0.000px;-webkit-text-stroke:0.2px;transform:scaleX(0.8489);transform-origin:0 0;font-style:italic"><span style="color:#e8eaed">}</span></span>
<div style="left:734px;top:391px;width:270px;height:1px;background:#3e3f42"></div>
<div style="left:734px;top:392px;width:270px;height:19px;background:#292a2d"></div>
<div style="left:734px;top:411px;width:270px;height:1px;background:#3e3f42"></div>
<span class="t" style="left:736.42px;top:391.36px;font-family:'Liberation Sans', sans-serif;font-size:10.5px;font-weight:400;font-style:normal;line-height:20px;color:#9aa0a6;-webkit-text-stroke:0.15px;transform:scaleX(0.9794);transform-origin:0 0;">Inherited from</span>
<span class="t" style="left:804.1px;top:391.88px;font-family:'Liberation Mono', monospace;font-size:10.6px;line-height:20px;letter-spacing:0.000px;-webkit-text-stroke:0.2px;transform:scaleX(0.8489);transform-origin:0 0;"><span style="color:#30d6cf">html</span></span>
<span class="t" style="left:736.9px;top:410.58px;font-family:'Liberation Mono', monospace;font-size:10.6px;line-height:20px;letter-spacing:0.000px;-webkit-text-stroke:0.2px;transform:scaleX(0.8489);transform-origin:0 0;"><span style="color:#e8eaed">:root {</span></span>
<span class="t" style="left:963.2px;top:410.58px;font-family:'Liberation Mono', monospace;font-size:10.6px;line-height:20px;letter-spacing:0.000px;-webkit-text-stroke:0.2px;transform:scaleX(0.8489);transform-origin:0 0;"><span style="color:#9aa0a6">&lt;style&gt;</span></span>
<span class="t" style="left:751.5px;top:423.58px;font-family:'Liberation Mono', monospace;font-size:10.6px;line-height:20px;letter-spacing:0.000px;-webkit-text-stroke:0.2px;transform:scaleX(0.8489);transform-origin:0 0;"><span style="color:#30d6cf">--kk-background-color-button</span><span style="color:#e8eaed">: </span></span>
<span class="t" style="left:924.5px;top:423.58px;font-family:'Liberation Mono', monospace;font-size:10.6px;line-height:20px;letter-spacing:0.000px;-webkit-text-stroke:0.2px;transform:scaleX(0.8489);transform-origin:0 0;"><span style="color:#e8eaed">#1b5ba7;</span></span>
<div style="left:915.3px;top:429.1px;width:8px;height:8px;background:#1b5ba7;box-sizing:border-box;border:1px solid #777"></div>
<span class="t" style="left:736.9px;top:435.18px;font-family:'Liberation Mono', monospace;font-size:10.6px;line-height:20px;letter-spacing:0.000px;-webkit-text-stroke:0.2px;transform:scaleX(0.8489);transform-origin:0 0;"><span style="color:#e8eaed">}</span></span>
<div style="left:734px;top:453px;width:270px;height:1px;background:#3e3f42"></div>
<span class="t" style="left:736.9px;top:452.18px;font-family:'Liberation Mono', monospace;font-size:10.6px;line-height:20px;letter-spacing:0.000px;-webkit-text-stroke:0.2px;transform:scaleX(0.8489);transform-origin:0 0;"><span style="color:#e8eaed">:root {</span></span>
<span class="t" style="left:963.2px;top:452.18px;font-family:'Liberation Mono', monospace;font-size:10.6px;line-height:20px;letter-spacing:0.000px;-webkit-text-stroke:0.2px;transform:scaleX(0.8489);transform-origin:0 0;"><span style="color:#9aa0a6">&lt;style&gt;</span></span>
<span class="t" style="left:751.5px;top:464.88px;font-family:'Liberation Mono', monospace;font-size:10.6px;line-height:20px;letter-spacing:0.000px;-webkit-text-stroke:0.2px;transform:scaleX(0.8489);transform-origin:0 0;"><span style="color:#30d6cf">--kk-dock-addon-button-color</span><span style="color:#e8eaed">: </span></span>
<span class="t" style="left:924.5px;top:464.88px;font-family:'Liberation Mono', monospace;font-size:10.6px;line-height:20px;letter-spacing:0.000px;-webkit-text-stroke:0.2px;transform:scaleX(0.8489);transform-origin:0 0;"><span style="color:#e8eaed">#5454d3;</span></span>
<div style="left:915.3px;top:470.4px;width:8px;height:8px;background:#5454d3;box-sizing:border-box;border:1px solid #777"></div>
<span class="t" style="left:751.5px;top:476.78px;font-family:'Liberation Mono', monospace;font-size:10.6px;line-height:20px;letter-spacing:0.000px;-webkit-text-stroke:0.2px;transform:scaleX(0.8489);transform-origin:0 0;"><span style="color:#30d6cf">--kk-dock-addon-button-color-active</span><span style="color:#e8eaed">:</span></span>
<div style="left:768.7px;top:493.7px;width:8px;height:8px;background:yellow;box-sizing:border-box;border:1px solid #777"></div>
<span class="t" style="left:778px;top:488.18px;font-family:'Liberation Mono', monospace;font-size:10.6px;line-height:20px;letter-spacing:0.000px;-webkit-text-stroke:0.2px;transform:scaleX(0.8489);transform-origin:0 0;"><span style="color:#e8eaed">yellow;</span></span>
<span class="t" style="left:751.5px;top:499.78px;font-family:'Liberation Mono', monospace;font-size:10.6px;line-height:20px;letter-spacing:0.000px;-webkit-text-stroke:0.2px;transform:scaleX(0.8489);transform-origin:0 0;"><span style="color:#30d6cf">--kk-dock-addon-font-family</span><span style="color:#e8eaed">: arial, sans-</span></span>
<span class="t" style="left:768.2px;top:510.38px;font-family:'Liberation Mono', monospace;font-size:10.6px;line-height:20px;letter-spacing:0.000px;-webkit-text-stroke:0.2px;transform:scaleX(0.8489);transform-origin:0 0;"><span style="color:#e8eaed">serif;</span></span>
<span class="t" style="left:736.9px;top:522.48px;font-family:'Liberation Mono', monospace;font-size:10.6px;line-height:20px;letter-spacing:0.000px;-webkit-text-stroke:0.2px;transform:scaleX(0.8489);transform-origin:0 0;"><span style="color:#e8eaed">}</span></span>
<div style="left:986px;top:496px;width:38px;height:53px;background:linear-gradient(180deg,#d6d7cf 0px,#d0d1ca 30px,#bfc2bf 42px,#b4b8b6 46px,#8c9094 46px,#8a8e92 53px);box-sizing:border-box;border-top:1px solid #eeeee6;border-left:1px solid #e8e8de"></div>
<div style="left:20px;top:16px;width:47px;height:43px;box-sizing:border-box;border:5px solid #0cf60c;border-radius:2px"></div>
</body></html>
